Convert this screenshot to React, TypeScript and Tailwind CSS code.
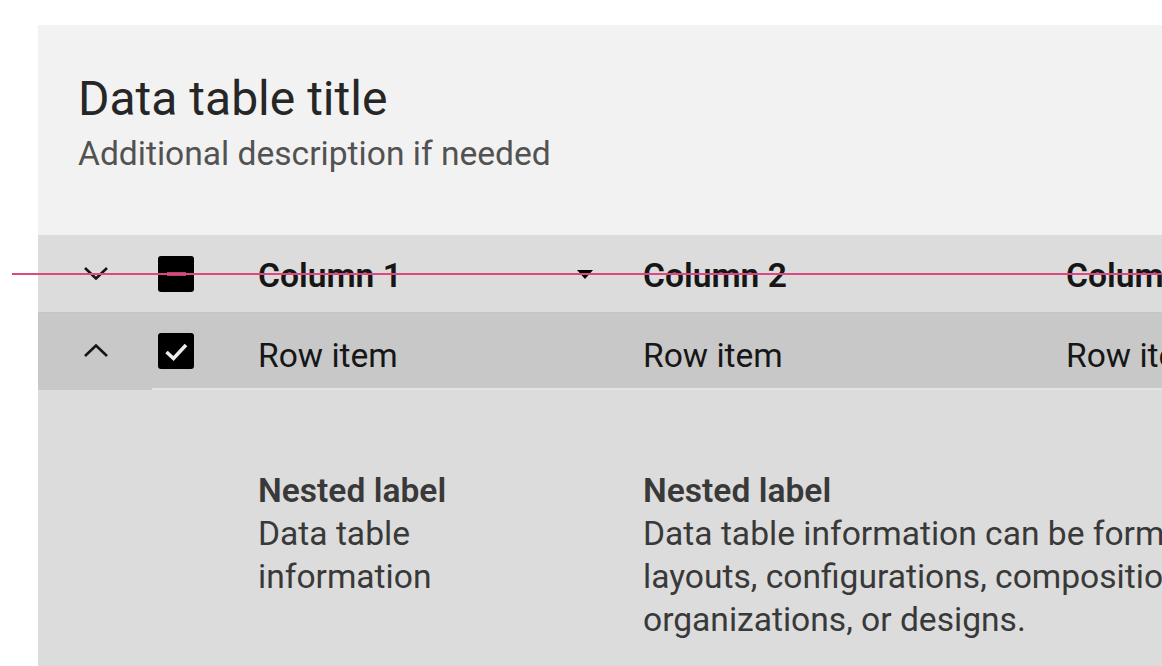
import React from "react";

function ChevronIcon({ up }: { up?: boolean }) {
  return (
    <svg width="24" height="13" viewBox="0 0 24 13" fill="none" stroke="#161616" strokeWidth={2.6}>
      <path d={up ? "M1 12 L12 1.5 L23 12" : "M1 1 L12 11.5 L23 1"} />
    </svg>
  );
}

function Checkbox({ state }: { state: "checked" | "mixed" }) {
  return (
    <div className="w-[36px] h-[36px] rounded-[3px] bg-black flex items-center justify-center">
      <svg
        width="36"
        height="36"
        viewBox="0 0 36 36"
        fill="none"
        stroke={state === "checked" ? "#ececec" : "#de5588"}
        strokeWidth={3.6}
      >
        {state === "checked" ? (
          <path d="M8.5 19 L15.5 25.5 L28 12" />
        ) : (
          <path d="M9 18 H28" />
        )}
      </svg>
    </div>
  );
}

function SortArrow() {
  return (
    <svg width="16" height="10" viewBox="0 0 16 10" fill="#000">
      <path d="M0 1 H16 L8 10 Z" />
    </svg>
  );
}

const cols = "grid grid-cols-[115px_105px_385px_423px_420px]";

export default function App() {
  return (
    <div className="relative h-[666px] w-full overflow-hidden bg-white font-['Roboto',sans-serif]">
      <div className="pt-[25px] pl-[38px]">
        <div className="w-[1460px] bg-[#f2f2f2]">
          {/* Title */}
          <div className="pl-[40px] pt-[43px] pb-[57px]">
            <h2 className="text-[48px] leading-[62px] text-[#262626]">Data table title</h2>
            <p className="text-[33.6px] leading-[48px] text-[#525252]">Additional description if needed</p>
          </div>

          {/* Header row */}
          <div className={`${cols} h-[78px] bg-[#dcdcdc] border-b border-[#c4c4c4]`}>
            <div className="flex items-center justify-center">
              <ChevronIcon />
            </div>
            <div className="flex items-center pl-[5px]">
              <Checkbox state="mixed" />
            </div>
            <div className="flex items-center justify-between pr-[50px] text-[33.6px] font-semibold text-[#161616]">
              <span className="pt-[6px]">Column 1</span>
              <SortArrow />
            </div>
            <div className="flex items-center pt-[6px] text-[33.6px] font-semibold text-[#161616]">Column 2</div>
            <div className="flex items-center pt-[6px] text-[33.6px] font-semibold text-[#161616]">Column 3</div>
          </div>

          {/* Expanded row */}
          <div className={`${cols} h-[75px] bg-[#c8c8c8] text-[33.6px] text-[#161616]`}>
            <div className="flex items-center justify-center">
              <ChevronIcon up />
            </div>
            <div className="flex items-center pl-[5px]">
              <Checkbox state="checked" />
            </div>
            <div className="flex items-center pt-[11px]">Row item</div>
            <div className="flex items-center pt-[11px]">Row item</div>
            <div className="flex items-center pt-[11px]">Row item</div>
          </div>

          {/* Expanded content */}
          <div className="flex h-[2px]">
            <div className="w-[114px] bg-[#c8c8c8]" />
            <div className="flex-1 bg-[#e2e2e2]" />
          </div>
          <div className={`${cols} bg-[#dcdcdc] pt-[79px] pb-[80px] text-[33.6px] leading-[43px] text-[#393939]`}>
            <div />
            <div />
            <div>
              <div className="font-semibold">Nested label</div>
              <div>Data table</div>
              <div>information</div>
            </div>
            <div className="col-span-2 whitespace-nowrap">
              <div className="font-semibold">Nested label</div>
              <div>Data table information can be formatted into various</div>
              <div>layouts, configurations, compositions,</div>
              <div>organizations, or designs.</div>
            </div>
          </div>
        </div>
      </div>

      {/* Redline annotation */}
      <div className="absolute left-[12px] right-0 top-[273px] h-[2px] bg-[#dc4880]" />
    </div>
  );
}
